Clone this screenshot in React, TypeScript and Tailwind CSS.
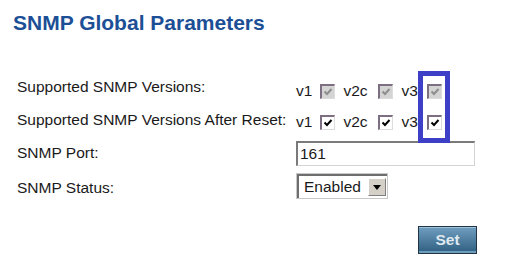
import React from "react";

function Check({ disabled }: { disabled?: boolean }) {
  return (
    <span
      className={
        "inline-flex items-center justify-center w-[15px] h-[15px] mb-[1px] border-t-2 border-l-2 border-t-[#7d6f82] border-l-[#7d6f82] border-r border-b border-r-[#dcdcdc] border-b-[#dcdcdc] " +
        (disabled ? "bg-[#d4d4d4]" : "bg-white")
      }
    >
      <svg width="10" height="9" viewBox="0 0 10 9">
        <path
          d="M1.5 4.5 L4 7 L8.5 2"
          fill="none"
          stroke={disabled ? "#8e8e8e" : "#000"}
          strokeWidth="2"
        />
      </svg>
    </span>
  );
}

function Versions({ disabled, mt }: { disabled?: boolean; mt: string }) {
  return (
    <div className={"flex items-baseline leading-[16px] text-[15.5px] text-[#1a1a1a] " + mt}>
      <span>v1</span>
      <span className="ml-[8px]">
        <Check disabled={disabled} />
      </span>
      <span className="ml-[8px]">v2c</span>
      <span className="ml-[10px]">
        <Check disabled={disabled} />
      </span>
      <span className="ml-[9px]">v3</span>
      <span className="ml-[9px]">
        <Check disabled={disabled} />
      </span>
    </div>
  );
}

export default function App() {
  return (
    <div
      className="relative w-[509px] h-[259px] bg-white overflow-hidden"
      style={{ fontFamily: '"Liberation Sans", Arial, sans-serif' }}
    >
      <div className="pt-[12px] pl-[13px] text-[21px] leading-[21px] font-bold text-[#1c4f96]">
        SNMP Global Parameters
      </div>

      <div className="mt-[37px] pl-[17px] text-[15.5px] text-[#1a1a1a]">
        <div className="flex h-[33px]">
          <div className="w-[279px] leading-[33px]">Supported SNMP Versions:</div>
          <Versions disabled mt="mt-[13px]" />
        </div>
        <div className="flex h-[33px]">
          <div className="w-[279px] leading-[33px] whitespace-nowrap">
            Supported SNMP Versions After Reset:
          </div>
          <Versions mt="mt-[11px]" />
        </div>
        <div className="flex h-[35px]">
          <div className="w-[279px] leading-[33px]">SNMP Port:</div>
          <div className="mt-[5px] w-[179px] h-[25px] border-t-2 border-l-2 border-t-[#7a7a7a] border-l-[#7a7a7a] border-r border-b border-r-[#d4d4d4] border-b-[#d4d4d4] bg-white pl-[2px] leading-[21px]">
            161
          </div>
        </div>
        <div className="flex h-[33px]">
          <div className="w-[279px] leading-[33px]">SNMP Status:</div>
          <div className="mt-[2px] w-[92px] h-[26px] border border-[#c8c8c8]">
            <div className="flex items-center h-full border-t-2 border-l-2 border-t-[#6e6e6e] border-l-[#6e6e6e] bg-white pl-[5px] pr-[1px]">
              <span className="flex-1 leading-[20px]">Enabled</span>
              <span className="flex items-center justify-center w-[18px] h-[18px] bg-[#d4d0c8] border-t border-l border-t-white border-l-white border-r border-b border-r-[#808080] border-b-[#808080]">
                <svg width="8" height="5" viewBox="0 0 8 5">
                  <path d="M0 0 L8 0 L4 5 Z" fill="#000" />
                </svg>
              </span>
            </div>
          </div>
        </div>
      </div>

      <div className="flex justify-end pr-[32px] mt-[22px]">
        <button className="w-[59px] h-[28px] border border-[#233444] bg-gradient-to-b from-[#6f9ec0] to-[#2f5f80] shadow-[inset_0_1px_0_#9cc3dc,inset_0_-2px_0_#6b9dbd] text-[15.5px] font-bold text-[#dfe9f0] leading-[26px]">
          Set
        </button>
      </div>

      <div className="absolute left-[418px] top-[71px] w-[32px] h-[72px] border-[5px] border-[#3d3fc6]" />
    </div>
  );
}
